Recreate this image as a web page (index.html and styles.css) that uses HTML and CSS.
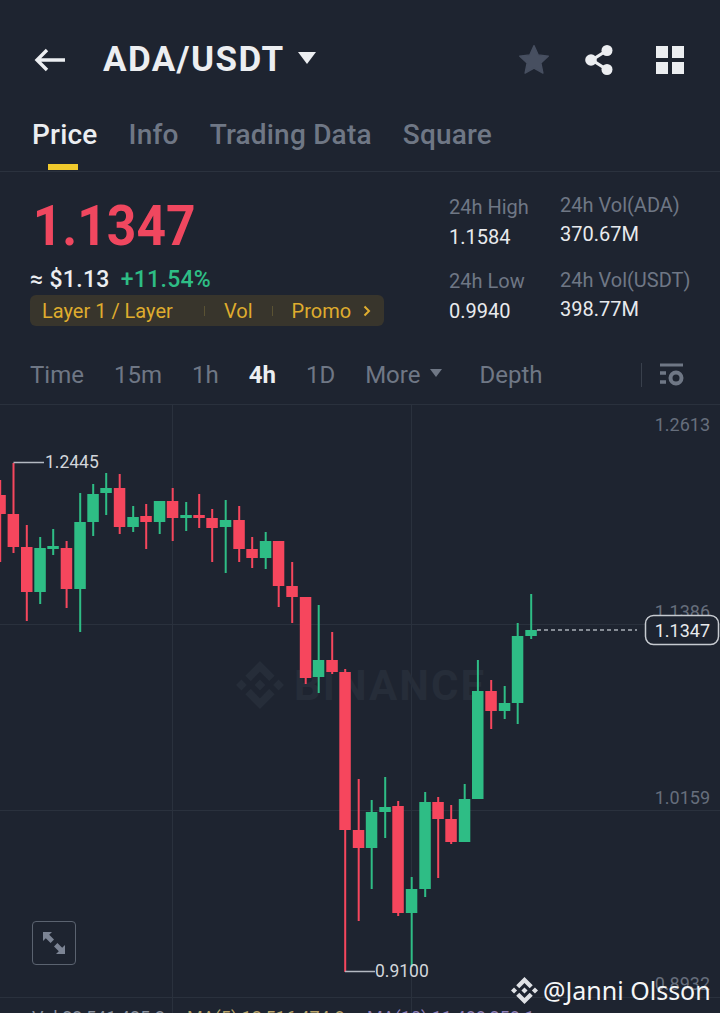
FILE: index.html
```html
<!DOCTYPE html>
<html lang="en">
<head>
	<meta charset="UTF-8">
	<title>ADA/USDT</title>
	<link rel="stylesheet" href="styles.css">
</head>
<body>

	<div id="page">
		<div class="topbar">
			<svg class="back" width="32" height="26" viewBox="0 0 32 26"><path d="M31 13H4M13 3L3 13l10 10" fill="none" stroke="#eceef1" stroke-width="3.4"/></svg>
			<h1 class="pair">ADA/USDT</h1>
			<span class="caret"></span>
			<div class="topicons">
				<svg class="star" width="32" height="32" viewBox="0 0 24 24"><path d="M12 1.200l3.200 7 7.600.9-5.600 5.200 1.500 7.500L12 18.100l-6.700 3.700 1.500-7.500L1.200 9.100l7.600-.9z" fill="#474f60" stroke="#474f60" stroke-linejoin="round"/></svg>
				<svg class="share" width="30" height="32" viewBox="0 0 30 32"><path d="M22 7L8 16l14 9" fill="none" stroke="#eceef1" stroke-width="3.200"/><circle cx="23" cy="6.500" r="5.500" fill="#eceef1"/><circle cx="7" cy="16" r="5.800" fill="#eceef1"/><circle cx="23" cy="25.500" r="5.500" fill="#eceef1"/></svg>
				<div class="gridicon"><i></i><i></i><i></i><i></i></div>
			</div>
		</div>

		<div class="tabs">
			<span class="tab cur">Price</span>
			<span class="tab">Info</span>
			<span class="tab">Trading Data</span>
			<span class="tab">Square</span>
		</div>

		<div class="stats">
			<div class="stats-left">
				<div class="price">1.1347</div>
				<div class="sub"><span class="usd">≈ $1.13</span><span class="pct">+11.54%</span></div>
				<div class="tags">
					<span class="tag-a">Layer 1 / Layer</span>
					<i class="sep"></i>
					<span>Vol</span>
					<i class="sep"></i>
					<span>Promo</span>
					<svg width="10" height="12" viewBox="0 0 10 12"><path d="M2.500 1.500L7 6l-4.500 4.500" fill="none" stroke="#e0ae2f" stroke-width="2"/></svg>
				</div>
			</div>
			<div class="stats-col col-high">
				<div class="cell"><span class="lbl">24h High</span><span class="val">1.1584</span></div>
				<div class="cell"><span class="lbl">24h Low</span><span class="val">0.9940</span></div>
			</div>
			<div class="stats-col col-vol">
				<div class="cell"><span class="lbl">24h Vol(ADA)</span><span class="val">370.67M</span></div>
				<div class="cell"><span class="lbl">24h Vol(USDT)</span><span class="val">398.77M</span></div>
			</div>
		</div>

		<div class="frames">
			<span>Time</span>
			<span>15m</span>
			<span>1h</span>
			<span class="on">4h</span>
			<span>1D</span>
			<span class="more">More<i class="caret-sm"></i></span>
			<span>Depth</span>
			<div class="frames-right">
				<i class="divider"></i>
				<svg width="25" height="24" viewBox="0 0 25 24"><path d="M1 2h23" stroke="#6f7785" stroke-width="3"/><path d="M1 10h6M1 19h6" stroke="#6f7785" stroke-width="3.500"/><circle cx="17" cy="15" r="5.500" fill="none" stroke="#6f7785" stroke-width="4"/></svg>
			</div>
		</div>

		<div class="chart">
			<svg width="720" height="609" viewBox="0 404 720 609">
				<g class="grid">
					<path d="M0 404.500H720M0 624.500H720M0 810.500H720M0 997.500H720M172.500 404V1013M411.500 404V1013"/>
				</g>
				<g class="mark">
					<path transform="translate(236 661) scale(2)" d="M16.624 13.920l2.718 2.716-7.353 7.353-7.353-7.352 2.718-2.717 4.635 4.660 4.636-4.660zm4.637-4.637L24 12l-2.715 2.716L18.568 12l2.693-2.717zm-9.272.001l2.716 2.692-2.716 2.717v-.001L9.272 12l2.717-2.716zm-9.272-.001L5.409 12l-2.691 2.692L0 12l2.717-2.717zM11.989.012l7.353 7.329-2.718 2.715-4.635-4.635-4.636 4.659-2.717-2.715 7.353-7.353z"/>
					<text x="294" y="700">BINANCE</text>
				</g>
				<g class="axis">
					<text x="710" y="431">1.2613</text>
					<text x="710" y="618">1.1386</text>
					<text x="710" y="804">1.0159</text>
					<text x="710" y="990">0.8932</text>
				</g>

				<g class="dn">
					<rect x="-0.800" y="480" width="1.700" height="82"/><rect x="-5.700" y="495" width="11.500" height="19"/>
					<rect x="12.500" y="463" width="1.700" height="90"/><rect x="7.600" y="514" width="11.500" height="33"/>
					<rect x="25.800" y="525" width="1.700" height="96"/><rect x="21" y="547" width="11.500" height="45"/>
					<rect x="65.600" y="541" width="1.700" height="67"/><rect x="60.700" y="548" width="11.500" height="41"/>
					<rect x="118.700" y="474" width="1.700" height="60"/><rect x="113.800" y="488" width="11.500" height="39"/>
					<rect x="145.200" y="504" width="1.700" height="45"/><rect x="140.300" y="516" width="11.500" height="6"/>
					<rect x="171.700" y="488" width="1.700" height="53"/><rect x="166.800" y="501" width="11.500" height="17"/>
					<rect x="198.200" y="494" width="1.700" height="34"/><rect x="193.300" y="515" width="11.500" height="3"/>
					<rect x="211.200" y="509" width="1.700" height="53"/><rect x="206.300" y="518" width="11.500" height="10"/>
					<rect x="238.200" y="506" width="1.700" height="56"/><rect x="233.300" y="520" width="11.500" height="29"/>
					<rect x="251.200" y="537" width="1.700" height="31"/><rect x="246.300" y="549" width="11.500" height="9"/>
					<rect x="277.700" y="541" width="1.700" height="66"/><rect x="272.800" y="541" width="11.500" height="45"/>
					<rect x="291.200" y="562" width="1.700" height="61"/><rect x="286.300" y="586" width="11.500" height="11"/>
					<rect x="304.700" y="597" width="1.700" height="87"/><rect x="299.800" y="597" width="11.500" height="81"/>
					<rect x="331.200" y="632" width="1.700" height="42"/><rect x="326.300" y="660" width="11.500" height="12"/>
					<rect x="344.200" y="669" width="1.700" height="303"/><rect x="339.300" y="672" width="11.500" height="158"/>
					<rect x="357.700" y="779" width="1.700" height="142"/><rect x="352.800" y="830" width="11.500" height="18"/>
					<rect x="397.200" y="801" width="1.700" height="115"/><rect x="392.300" y="806" width="11.500" height="107"/>
					<rect x="437.200" y="797" width="1.700" height="81"/><rect x="432.300" y="802" width="11.500" height="17"/>
					<rect x="450.200" y="805" width="1.700" height="39"/><rect x="445.300" y="819" width="11.500" height="23"/>
					<rect x="490.200" y="680" width="1.700" height="49"/><rect x="485.300" y="691" width="11.500" height="20"/>
				</g>
				<g class="up">
					<rect x="39.200" y="537" width="1.700" height="67"/><rect x="34.300" y="548" width="11.500" height="44"/>
					<rect x="52.200" y="529" width="1.700" height="26"/><rect x="47.300" y="546" width="11.500" height="3"/>
					<rect x="79.200" y="493" width="1.700" height="139"/><rect x="74.300" y="522" width="11.500" height="67"/>
					<rect x="92.200" y="484" width="1.700" height="52"/><rect x="87.300" y="494" width="11.500" height="28"/>
					<rect x="105.200" y="473" width="1.700" height="42"/><rect x="100.300" y="488" width="11.500" height="5"/>
					<rect x="132.200" y="506" width="1.700" height="26"/><rect x="127.300" y="517" width="11.500" height="10"/>
					<rect x="158.700" y="501" width="1.700" height="33"/><rect x="153.800" y="501" width="11.500" height="21"/>
					<rect x="185.200" y="502" width="1.700" height="29"/><rect x="180.300" y="515" width="11.500" height="3"/>
					<rect x="224.700" y="500" width="1.700" height="73"/><rect x="219.800" y="520" width="11.500" height="7"/>
					<rect x="264.700" y="532" width="1.700" height="37"/><rect x="259.800" y="541" width="11.500" height="17"/>
					<rect x="317.700" y="605" width="1.700" height="88"/><rect x="312.800" y="660" width="11.500" height="17"/>
					<rect x="370.700" y="800" width="1.700" height="89"/><rect x="365.800" y="812" width="11.500" height="36"/>
					<rect x="384.200" y="777" width="1.700" height="61"/><rect x="379.300" y="807" width="11.500" height="5"/>
					<rect x="410.700" y="877" width="1.700" height="90"/><rect x="405.800" y="889" width="11.500" height="24"/>
					<rect x="424.200" y="792" width="1.700" height="105"/><rect x="419.300" y="802" width="11.500" height="87"/>
					<rect x="463.700" y="784" width="1.700" height="58"/><rect x="458.800" y="799" width="11.500" height="43"/>
					<rect x="476.900" y="660" width="1.700" height="40"/><rect x="472" y="691" width="11.500" height="108"/>
					<rect x="503.700" y="686" width="1.700" height="33"/><rect x="498.800" y="703" width="11.500" height="8"/>
					<rect x="516.700" y="623" width="1.700" height="101"/><rect x="511.800" y="636" width="11.500" height="67"/>
					<rect x="530.200" y="594" width="1.700" height="45"/><rect x="525.300" y="630" width="11.500" height="6"/>
				</g>

				<g class="extreme">
					<path d="M13.500 462.500H44M345 971.500H375"/>
					<text x="45" y="468">1.2445</text>
					<text x="375" y="977">0.9100</text>
				</g>

				<path class="last-line" d="M537 630H637"/>
				<rect class="last-box" x="645.500" y="615.500" width="73" height="29" rx="8"/>
				<text class="last-text" x="710" y="637">1.1347</text>

				<g class="legend">
					<text x="32" y="1024" class="l-vol">Vol 23,541,425.3</text>
					<text x="187" y="1024" class="l-ma5">MA(5) 12,516,474.8</text>
					<text x="367" y="1024" class="l-ma10">MA(10) 11,488,258.1</text>
				</g>
			</svg>

			<div class="expand">
				<svg width="26" height="26" viewBox="0 0 26 26"><path d="M2 2h9L8.200 4.800l4.800 4.800-3.400 3.400-4.800-4.800L2 11zM24 24h-9l2.800-2.800-4.800-4.800 3.400-3.400 4.800 4.800L24 15z" fill="#7c8494"/></svg>
			</div>

			<div class="credit">
				<svg width="27" height="27" viewBox="0 0 24 24"><path d="M16.624 13.920l2.718 2.716-7.353 7.353-7.353-7.352 2.718-2.717 4.635 4.660 4.636-4.660zm4.637-4.637L24 12l-2.715 2.716L18.568 12l2.693-2.717zm-9.272.001l2.716 2.692-2.716 2.717v-.001L9.272 12l2.717-2.716zm-9.272-.001L5.409 12l-2.691 2.692L0 12l2.717-2.717zM11.989.012l7.353 7.329-2.718 2.715-4.635-4.635-4.636 4.659-2.717-2.715 7.353-7.353z" fill="#dfe1e5"/></svg>
				<span>@Janni Olsson</span>
			</div>
		</div>
	</div>

</body>
</html>
```

FILE: styles.css
```css
html,body{
	margin: 0;
	padding: 0;
	background-color: #1e2430;
}
#page{
	width: 720px;
	height: 1013px;
	overflow: hidden;
	font-family: "Roboto", "Liberation Sans", sans-serif;
	color: #eceef1;
}
i{
	display: block;
}

.topbar{
	display: flex;
	align-items: center;
	height: 40px;
	padding: 40px 36px 0 34px;
}
.pair{
	margin: 0 0 0 37px;
	font-size: 35px;
	font-weight: 700;
	line-height: 40px;
	letter-spacing: 1.4px;
}
.caret{
	width: 0;
	height: 0;
	margin: -4px 0 0 13px;
	border-top: solid 12px #eceef1;
	border-left: transparent 9px solid;
	border-right: transparent 9px solid;
}
.topicons{
	display: flex;
	align-items: center;
	margin-left: auto;
}
.star{
	margin-right: 34px;
}
.share{
	margin-right: 42px;
}
.gridicon{
	display: grid;
	grid-template-columns: 12px 12px;
	grid-template-rows: 12px 12px;
	gap: 4px;
}
.gridicon i{
	background-color: #eceef1;
}

.tabs{
	display: flex;
	gap: 31px;
	height: 51px;
	margin-top: 40px;
	padding-left: 32px;
	border-bottom: solid 1px #2b323e;
}
.tab{
	position: relative;
	font-size: 28px;
	font-weight: 500;
	line-height: 30px;
	letter-spacing: 0.2px;
	color: #6f7785;
}
.tab.cur{
	color: #eceef1;
}
.tab.cur::after{
	content: "";
	position: absolute;
	left: 16px;
	bottom: 1px;
	width: 30px;
	height: 6px;
	background-color: #f0c92c;
}

.stats{
	display: flex;
	height: 174px;
	box-sizing: border-box;
	padding: 22px 0 0 30px;
}
.stats-left{
	width: 419px;
	flex: none;
}
.price{
	margin-top: 2px;
	padding-left: 3px;
	font-size: 56px;
	font-weight: 700;
	line-height: 60px;
	color: #f0475f;
	transform: scaleX(0.92);
	transform-origin: left;
}
.sub{
	display: flex;
	gap: 11px;
	margin-top: 10px;
	font-size: 23px;
	font-weight: 500;
	line-height: 28px;
	letter-spacing: 0.3px;
}
.pct{
	color: #2ebd85;
}
.tags{
	display: flex;
	align-items: center;
	width: 354px;
	height: 31px;
	box-sizing: border-box;
	margin-top: 1px;
	padding: 0 12px;
	background-color: #38352c;
	border-radius: 6px;
	font-size: 20px;
	color: #dfac2e;
}
.tag-a{
	width: 132px;
	margin-right: 11px;
}
.sep{
	width: 1px;
	height: 10px;
	margin: 0 19px;
	background-color: #5a5233;
}
.tags svg{
	margin-left: auto;
}
.stats-col{
	display: flex;
	flex-direction: column;
}
.col-high{
	width: 111px;
	gap: 18px;
}
.col-vol{
	margin-top: -2px;
	gap: 20px;
}
.cell{
	display: flex;
	flex-direction: column;
	gap: 4px;
}
.col-vol .cell{
	gap: 3px;
}
.lbl{
	font-size: 20px;
	line-height: 26px;
	color: #6f7785;
}
.val{
	font-size: 20px;
	line-height: 26px;
	color: #e8eaed;
}

.frames{
	display: flex;
	align-items: center;
	gap: 30px;
	height: 58px;
	padding-left: 30px;
	font-size: 24px;
	color: #6f7785;
}
.frames .on{
	font-weight: 700;
	color: #eceef1;
}
.more{
	display: flex;
	align-items: center;
	gap: 10px;
	margin-right: 7px;
}
.caret-sm{
	width: 0;
	height: 0;
	margin-top: -5px;
	border-top: solid 8px #6f7785;
	border-left: transparent 6px solid;
	border-right: transparent 6px solid;
}
.frames-right{
	display: flex;
	align-items: center;
	gap: 17px;
	margin-left: auto;
	padding-right: 36px;
}
.divider{
	width: 1px;
	height: 24px;
	background-color: #39404c;
}

.chart{
	position: relative;
	height: 609px;
}
.chart svg{
	display: block;
}
.chart text{
	font-family: "Roboto", "Liberation Sans", sans-serif;
}
.grid path{
	fill: none;
	stroke: #2a313d;
	stroke-width: 1;
}
.mark path{
	fill: #262d39;
}
.mark text{
	font-size: 42px;
	font-weight: 700;
	fill: #262d39;
	letter-spacing: 2px;
}
.axis text{
	font-size: 18px;
	fill: #666e7c;
	text-anchor: end;
}
.dn{
	fill: #f6465d;
}
.up{
	fill: #2ebd85;
}
.dn rect:nth-child(odd),
.up rect:nth-child(odd){
	width: 2px;
}
.extreme path{
	fill: none;
	stroke: #b4b9c1;
	stroke-width: 1.500;
}
.extreme text{
	font-size: 17.500px;
	fill: #d3d6db;
}
.last-line{
	fill: none;
	stroke: #a9aeb6;
	stroke-width: 1.500;
	stroke-dasharray: 4 3;
}
.last-box{
	fill: #1e2430;
	stroke: #c6cad0;
	stroke-width: 1.500;
}
.last-text{
	font-size: 18px;
	fill: #e8eaed;
	text-anchor: end;
}
.legend text{
	font-size: 18px;
}
.l-vol{
	fill: #8a919e;
}
.l-ma5{
	fill: #b9a46a;
}
.l-ma10{
	fill: #8f7fb8;
}

.expand{
	position: absolute;
	left: 32px;
	top: 517px;
	display: flex;
	align-items: center;
	justify-content: center;
	width: 42px;
	height: 42px;
	border: solid 1.500px #5b6370;
	border-radius: 4px;
}
.credit{
	position: absolute;
	left: 511px;
	top: 568px;
	display: flex;
	align-items: center;
	gap: 5px;
	font-family: "Noto Sans", sans-serif;
	font-size: 25px;
	line-height: 36px;
	color: #f5f6f7;
	white-space: nowrap;
}
```
